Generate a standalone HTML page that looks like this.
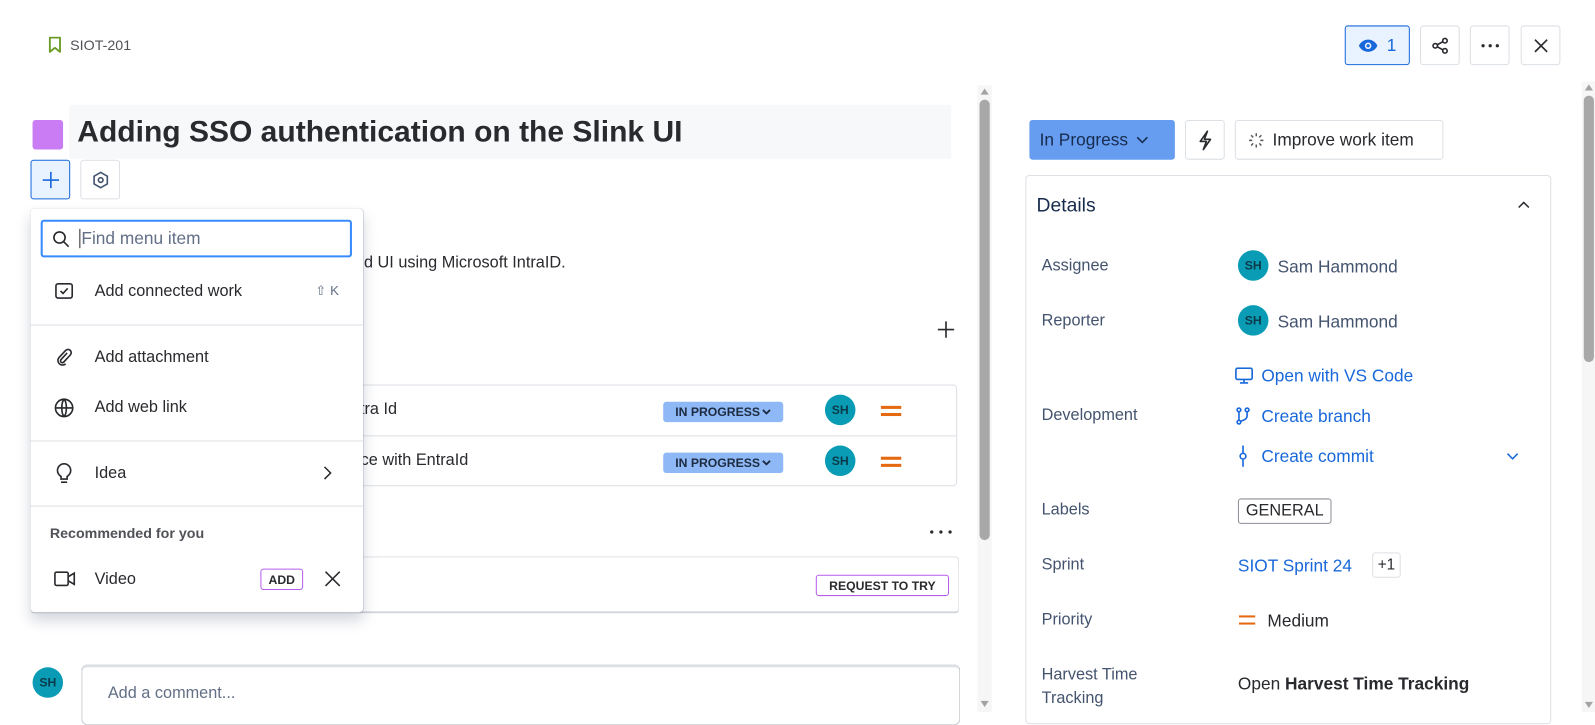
<!DOCTYPE html>
<html><head><meta charset="utf-8"><style>
html,body{margin:0;padding:0;background:#fff;overflow:hidden;width:1595px;height:712px}
#w{position:absolute;left:0;top:0;width:1568px;height:700px;transform:scale(1.0172);transform-origin:0 0;font-family:"Liberation Sans",sans-serif;color:#172b4d}
.a{position:absolute}
.t{position:absolute;white-space:nowrap;line-height:1}
.btn{position:absolute;border:1px solid #dcdfe4;border-radius:3px;background:#fff;box-sizing:border-box;display:flex;align-items:center;justify-content:center}
.av{position:absolute;width:30px;height:30px;border-radius:50%;background:#0a9cb5;color:#0b3a4a;font-size:12px;font-weight:bold;display:flex;align-items:center;justify-content:center}
.loz{position:absolute;background:#8fb8f6;border-radius:3px;font-size:12px;font-weight:bold;color:#1d2b40;display:flex;align-items:center;justify-content:center;gap:2px}
.eq{position:absolute;width:20px;height:10px;border-top:3px solid #e56910;border-bottom:3px solid #e56910;box-sizing:border-box}
.lbl{position:absolute;font-size:16px;color:#44546f;white-space:nowrap}
.mi{position:absolute;left:63px;font-size:16px;color:#292a2e;white-space:nowrap}
.hr{position:absolute;left:0;width:327px;height:1px;background:#dcdfe4}
.lnk{color:#1868db}
</style></head><body><div id="w">

<svg class="a" style="left:47px;top:36px" width="14" height="16" viewBox="0 0 14 16"><path d="M2 1h10v14l-5-4-5 4z" fill="none" stroke="#6a9a23" stroke-width="1.8" stroke-linejoin="round"/></svg>
<div class="t" style="left:69px;top:37px;font-size:14px;color:#505258">SIOT-201</div>

<div class="btn" style="left:1322px;top:25px;width:64px;height:39px;background:#e9f2ff;border-color:#1868db;color:#1868db;font-size:17px;gap:8px">
<svg width="20" height="14" viewBox="0 0 20 14"><path d="M10 1C5 1 1.5 5 1 7c.5 2 4 6 9 6s8.5-4 9-6c-.5-2-4-6-9-6z" fill="#1868db"/><circle cx="10" cy="7" r="3.2" fill="#e9f2ff"/><circle cx="10" cy="7" r="1.6" fill="#1868db"/></svg>1</div>
<div class="btn" style="left:1396px;top:25px;width:39px;height:39px"><svg width="18" height="18" viewBox="0 0 18 18" fill="none" stroke="#292a2e" stroke-width="1.6"><circle cx="4" cy="9" r="2.2"/><circle cx="13.5" cy="4" r="2.2"/><circle cx="13.5" cy="14" r="2.2"/><path d="M6 8l5.5-3M6 10l5.5 3"/></svg></div>
<div class="btn" style="left:1445px;top:25px;width:39px;height:39px"><svg width="18" height="4"><circle cx="2" cy="2" r="1.6" fill="#292a2e"/><circle cx="9" cy="2" r="1.6" fill="#292a2e"/><circle cx="16" cy="2" r="1.6" fill="#292a2e"/></svg></div>
<div class="btn" style="left:1495px;top:25px;width:39px;height:39px"><svg width="16" height="16" viewBox="0 0 16 16"><path d="M2 2l12 12M14 2L2 14" stroke="#292a2e" stroke-width="1.6"/></svg></div>

<div class="a" style="left:961px;top:84px;width:14px;height:616px;background:#f6f6f6"></div>
<svg class="a" style="left:963px;top:86px" width="10" height="8"><path d="M5 1l4 6H1z" fill="#a3a3a3"/></svg>
<div class="a" style="left:963px;top:98px;width:10px;height:433px;background:#a8a8a8;border-radius:5px"></div>
<svg class="a" style="left:963px;top:688px" width="10" height="8"><path d="M1 1h8L5 7z" fill="#a3a3a3"/></svg>

<div class="a" style="left:68px;top:103px;width:867px;height:53px;background:#f7f8f9"></div>
<div class="a" style="left:32px;top:118px;width:30px;height:29px;background:#c97cf4;border-radius:3px"></div>
<div class="t" style="left:76px;top:115px;font-size:29.5px;font-weight:bold;color:#292a2e">Adding SSO authentication on the Slink UI</div>
<div class="btn" style="left:30px;top:157px;width:39px;height:39px;background:#e9f2ff;border-color:#1868db"><svg width="18" height="18"><path d="M9 1v16M1 9h16" stroke="#1868db" stroke-width="1.6"/></svg></div>
<div class="btn" style="left:79px;top:157px;width:39px;height:39px"><svg width="18" height="18" viewBox="0 0 18 18" fill="none" stroke="#44546f" stroke-width="1.6"><path d="M9 1.5l6.5 3.7v7.6L9 16.5l-6.5-3.7V5.2z"/><circle cx="9" cy="9" r="2.3"/></svg></div>

<div class="t" style="left:340px;top:251px;font-size:16px;color:#292a2e">end UI using Microsoft IntraID.</div>
<svg class="a" style="left:921px;top:315px" width="18" height="18"><path d="M9 1v16M1 9h16" stroke="#292a2e" stroke-width="1.6"/></svg>
<div class="a" style="left:30px;top:378px;width:911px;height:100px;border:1px solid #dcdfe4;border-radius:4px;box-sizing:border-box"></div>
<div class="a" style="left:30px;top:428px;width:911px;height:1px;background:#dcdfe4"></div>
<div class="t" style="left:345px;top:395px;font-size:16px;color:#292a2e">ntra Id</div>
<div class="t" style="left:343px;top:445px;font-size:16px;color:#292a2e">vice with EntraId</div>
<div class="loz" style="left:652px;top:395px;width:118px;height:20px">IN PROGRESS <svg width="9" height="6"><path d="M1 1l3.5 3.5L8 1" stroke="#1d2b40" stroke-width="1.8" fill="none"/></svg></div>
<div class="loz" style="left:652px;top:445px;width:118px;height:20px">IN PROGRESS <svg width="9" height="6"><path d="M1 1l3.5 3.5L8 1" stroke="#1d2b40" stroke-width="1.8" fill="none"/></svg></div>
<div class="av" style="left:811px;top:388px">SH</div>
<div class="av" style="left:811px;top:438px">SH</div>
<div class="eq" style="left:866px;top:399px"></div>
<div class="eq" style="left:866px;top:449px"></div>
<svg class="a" style="left:913px;top:520px" width="24" height="6"><circle cx="3" cy="3" r="1.6" fill="#292a2e"/><circle cx="12" cy="3" r="1.6" fill="#292a2e"/><circle cx="21" cy="3" r="1.6" fill="#292a2e"/></svg>
<div class="a" style="left:30px;top:547px;width:913px;height:56px;border:1px solid #dcdfe4;border-bottom:2px solid #d0d3d8;border-radius:4px;box-sizing:border-box"></div>
<div class="a" style="left:802px;top:565px;width:131px;height:21px;border:1px solid #b65ceb;border-radius:3px;box-sizing:border-box;font-size:12px;font-weight:bold;color:#292a2e;display:flex;align-items:center;justify-content:center">REQUEST TO TRY</div>
<div class="av" style="left:32px;top:656px">SH</div>
<div class="a" style="left:80px;top:653px;width:864px;height:60px;border:1px solid #c8cbd0;border-top:3px solid #dcdfe4;border-radius:6px;box-sizing:border-box"></div>
<div class="t" style="left:106px;top:674px;font-size:16px;color:#626f86">Add a comment...</div>

<div class="a" style="left:30px;top:205px;width:327px;height:397px;background:#fff;border-radius:4px;box-shadow:0 8px 14px rgba(9,30,66,.18),0 0 1px rgba(9,30,66,.35)">
 <div class="a" style="left:10px;top:11px;width:306px;height:37px;border:2px solid #388bff;border-radius:3px;box-sizing:border-box"></div>
 <svg class="a" style="left:21px;top:21px" width="18" height="18" viewBox="0 0 18 18" fill="none" stroke="#292a2e" stroke-width="1.6"><circle cx="7.5" cy="7.5" r="5.5"/><path d="M11.5 11.5l5 5"/></svg>
 <div class="a" style="left:48px;top:20px;width:1px;height:19px;background:#292a2e"></div>
 <div class="t" style="left:50px;top:21px;font-size:17px;color:#626f86">Find menu item</div>

 <svg class="a" style="left:24px;top:73px" width="18" height="16" viewBox="0 0 18 16" fill="none" stroke="#292a2e" stroke-width="1.6"><rect x="1" y="1" width="16" height="14" rx="2"/><path d="M5.5 8l2.5 2.5 4.5-5"/></svg>
 <div class="mi" style="top:73px">Add connected work</div>
 <div class="t" style="left:280px;top:74px;font-size:13px;color:#626f86">⇧ K</div>
 <div class="hr" style="top:114px"></div>

 <svg class="a" style="left:24px;top:137px" width="18" height="18" viewBox="0 0 18 18" fill="none" stroke="#292a2e" stroke-width="1.6"><path d="M12 5l-6 6.5a1.8 1.8 0 0 0 2.6 2.5l6.5-7a3.2 3.2 0 0 0-4.6-4.5L4 9.5a4.5 4.5 0 0 0 6.5 6.2"/></svg>
 <div class="mi" style="top:138px">Add attachment</div>
 <svg class="a" style="left:23px;top:186px" width="20" height="20" viewBox="0 0 20 20" fill="none" stroke="#292a2e" stroke-width="1.6"><circle cx="10" cy="10" r="8.5"/><path d="M1.5 10h17M10 1.5c-3 3-3 14 0 17M10 1.5c3 3 3 14 0 17"/></svg>
 <div class="mi" style="top:187px">Add web link</div>
 <div class="hr" style="top:228px"></div>

 <svg class="a" style="left:25px;top:250px" width="16" height="22" viewBox="0 0 16 22" fill="none" stroke="#292a2e" stroke-width="1.6"><path d="M5 16v-2.5C3 12 1.5 10 1.5 7.5a6.5 6.5 0 0 1 13 0c0 2.5-1.5 4.5-3.5 6V16zM5 19h6"/></svg>
 <div class="mi" style="top:252px">Idea</div>
 <svg class="a" style="left:288px;top:253px" width="8" height="14"><path d="M1 1l6 6-6 6" stroke="#292a2e" stroke-width="1.5" fill="none"/></svg>
 <div class="hr" style="top:292px"></div>

 <div class="t" style="left:19px;top:312px;font-size:14px;font-weight:bold;color:#505258">Recommended for you</div>
 <svg class="a" style="left:23px;top:356px" width="22" height="16" viewBox="0 0 22 16" fill="none" stroke="#292a2e" stroke-width="1.6"><rect x="1" y="1.5" width="13" height="13" rx="1.5"/><path d="M14 6l6-3.5v11L14 10"/></svg>
 <div class="mi" style="top:356px">Video</div>
 <div class="a" style="left:226px;top:354px;width:42px;height:21px;border:1px solid #b65ceb;border-radius:3px;box-sizing:border-box;font-size:12px;font-weight:bold;color:#292a2e;display:flex;align-items:center;justify-content:center">ADD</div>
 <svg class="a" style="left:289px;top:356px" width="16" height="16"><path d="M1 1l14 14M15 1L1 15" stroke="#292a2e" stroke-width="1.5"/></svg>
</div>

<div class="a" style="left:1012px;top:118px;width:143px;height:39px;background:#669df1;border-radius:3px;font-size:17px;color:#172b4d;display:flex;align-items:center;padding-left:10px;box-sizing:border-box;gap:8px">In Progress <svg width="12" height="8"><path d="M1 1l5 5 5-5" stroke="#172b4d" stroke-width="1.5" fill="none"/></svg></div>
<div class="btn" style="left:1165px;top:118px;width:39px;height:39px"><svg width="16" height="20" viewBox="0 0 16 20"><path d="M10 1L3 11h6l-3 8 7-10H7z" fill="none" stroke="#292a2e" stroke-width="1.6" stroke-linejoin="round"/></svg></div>
<div class="btn" style="left:1214px;top:118px;width:205px;height:39px;justify-content:flex-start;padding-left:12px;gap:8px;font-size:17px;color:#292a2e"><svg width="16" height="16" viewBox="0 0 16 16" stroke="#505258" stroke-width="1.4"><path d="M8 1v3M8 12v3M1 8h3M12 8h3M3 3l2 2M11 11l2 2M13 3l-2 2M5 11l-2 2"/></svg>Improve work item</div>

<div class="a" style="left:1008px;top:172px;width:517px;height:540px;border:1px solid #dcdfe4;border-radius:4px;box-sizing:border-box"></div>
<div class="t" style="left:1019px;top:193px;font-size:19px;color:#172b4d">Details</div>
<svg class="a" style="left:1492px;top:197px" width="12" height="8"><path d="M1 7l5-5 5 5" stroke="#292a2e" stroke-width="1.5" fill="none"/></svg>

<div class="lbl" style="left:1024px;top:253px">Assignee</div>
<div class="lbl" style="left:1024px;top:307px">Reporter</div>
<div class="lbl" style="left:1024px;top:400px">Development</div>
<div class="lbl" style="left:1024px;top:493px">Labels</div>
<div class="lbl" style="left:1024px;top:547px">Sprint</div>
<div class="lbl" style="left:1024px;top:601px">Priority</div>
<div class="lbl" style="left:1024px;top:652px;line-height:23px;white-space:normal;width:120px">Harvest Time Tracking</div>

<div class="av" style="left:1217px;top:246px">SH</div>
<div class="t" style="left:1256px;top:254px;font-size:17px;color:#44546f">Sam Hammond</div>
<div class="av" style="left:1217px;top:300px">SH</div>
<div class="t" style="left:1256px;top:308px;font-size:17px;color:#44546f">Sam Hammond</div>

<svg class="a" style="left:1214px;top:361px" width="18" height="17" viewBox="0 0 18 17" fill="none" stroke="#1868db" stroke-width="1.6"><rect x="1" y="1" width="16" height="11" rx="1.5"/><path d="M9 12v3M5 15.5h8"/></svg>
<div class="t lnk" style="left:1240px;top:361px;font-size:17px">Open with VS Code</div>
<svg class="a" style="left:1215px;top:400px" width="14" height="18" viewBox="0 0 14 18" fill="none" stroke="#1868db" stroke-width="1.6"><circle cx="3" cy="3" r="1.8"/><circle cx="3" cy="15" r="1.8"/><circle cx="11" cy="3" r="1.8"/><path d="M3 5v8M11 5v4c0 3-3 4-6 5"/></svg>
<div class="t lnk" style="left:1240px;top:401px;font-size:17px">Create branch</div>
<svg class="a" style="left:1217px;top:438px" width="10" height="21" viewBox="0 0 10 21" fill="none" stroke="#1868db" stroke-width="1.6"><path d="M5 0v7M5 14v7"/><circle cx="5" cy="10.5" r="2.8"/></svg>
<div class="t lnk" style="left:1240px;top:440px;font-size:17px">Create commit</div>
<svg class="a" style="left:1481px;top:445px" width="12" height="8"><path d="M1 1l5 5 5-5" stroke="#1868db" stroke-width="1.5" fill="none"/></svg>

<div class="a" style="left:1217px;top:490px;width:92px;height:25px;border:1px solid #8c8f97;border-radius:3px;box-sizing:border-box;font-size:16px;color:#292a2e;display:flex;align-items:center;justify-content:center">GENERAL</div>
<div class="t lnk" style="left:1217px;top:548px;font-size:17px">SIOT Sprint 24</div>
<div class="a" style="left:1349px;top:543px;width:28px;height:25px;border:1px solid #dcdfe4;border-radius:3px;box-sizing:border-box;font-size:15px;color:#292a2e;display:flex;align-items:center;justify-content:center">+1</div>
<div class="eq" style="left:1218px;top:605px;width:16px;height:9px;border-width:2.5px"></div>
<div class="t" style="left:1246px;top:602px;font-size:17px;color:#292a2e">Medium</div>
<div class="t" style="left:1217px;top:664px;font-size:17px;color:#292a2e">Open <b>Harvest Time Tracking</b></div>

<div class="a" style="left:1555px;top:80px;width:13px;height:620px;background:#f6f6f6"></div>
<svg class="a" style="left:1557px;top:82px" width="10" height="8"><path d="M5 1l4 6H1z" fill="#a3a3a3"/></svg>
<div class="a" style="left:1557px;top:94px;width:10px;height:262px;background:#a8a8a8;border-radius:5px"></div>
<svg class="a" style="left:1557px;top:689px" width="10" height="8"><path d="M1 1h8L5 7z" fill="#a3a3a3"/></svg>
</div></body></html>
